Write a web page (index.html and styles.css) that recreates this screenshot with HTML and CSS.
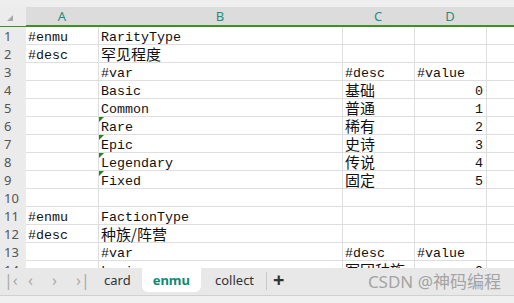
FILE: index.html
```html
<!DOCTYPE html>
<html lang="zh">
<head>
    <meta charset="UTF-8">
    <title>enmu</title>
    <link rel="stylesheet" href="styles.css">
</head>
<body>
    <div class="topstrip"></div>

    <div class="colhead">
        <div class="corner"><span class="tri"></span></div>
        <div class="ch">A</div>
        <div class="ch">B</div>
        <div class="ch">C</div>
        <div class="ch">D</div>
        <div class="ch"></div>
    </div>

    <div class="sheet">
        <div class="row"><div class="rn">1</div><div class="c">#enmu</div><div class="c">RarityType</div><div class="c"></div><div class="c"></div><div class="c"></div></div>
        <div class="row"><div class="rn">2</div><div class="c">#desc</div><div class="c cjk">罕见程度</div><div class="c"></div><div class="c"></div><div class="c"></div></div>
        <div class="row"><div class="rn">3</div><div class="c"></div><div class="c">#var</div><div class="c">#desc</div><div class="c">#value</div><div class="c"></div></div>
        <div class="row"><div class="rn">4</div><div class="c"></div><div class="c">Basic</div><div class="c cjk">基础</div><div class="c num">0</div><div class="c"></div></div>
        <div class="row"><div class="rn">5</div><div class="c"></div><div class="c">Common</div><div class="c cjk">普通</div><div class="c num">1</div><div class="c"></div></div>
        <div class="row"><div class="rn">6</div><div class="c"></div><div class="c note">Rare</div><div class="c cjk">稀有</div><div class="c num">2</div><div class="c"></div></div>
        <div class="row"><div class="rn">7</div><div class="c"></div><div class="c note">Epic</div><div class="c cjk">史诗</div><div class="c num">3</div><div class="c"></div></div>
        <div class="row"><div class="rn">8</div><div class="c"></div><div class="c note">Legendary</div><div class="c cjk">传说</div><div class="c num">4</div><div class="c"></div></div>
        <div class="row"><div class="rn">9</div><div class="c"></div><div class="c note">Fixed</div><div class="c cjk">固定</div><div class="c num">5</div><div class="c"></div></div>
        <div class="row"><div class="rn">10</div><div class="c"></div><div class="c"></div><div class="c"></div><div class="c"></div><div class="c"></div></div>
        <div class="row"><div class="rn">11</div><div class="c">#enmu</div><div class="c">FactionType</div><div class="c"></div><div class="c"></div><div class="c"></div></div>
        <div class="row"><div class="rn">12</div><div class="c">#desc</div><div class="c cjk">种族/阵营</div><div class="c"></div><div class="c"></div><div class="c"></div></div>
        <div class="row"><div class="rn">13</div><div class="c"></div><div class="c">#var</div><div class="c">#desc</div><div class="c">#value</div><div class="c"></div></div>
        <div class="row"><div class="rn">14</div><div class="c"></div><div class="c">Legion</div><div class="c cjk">军团种族</div><div class="c num">0</div><div class="c"></div></div>
    </div>

    <div class="tabbar">
        <div class="nav">
            <span class="navbtn">|&lsaquo;</span>
            <span class="navbtn">&lsaquo;</span>
            <span class="navbtn">&rsaquo;</span>
            <span class="navbtn">&rsaquo;|</span>
        </div>
        <div class="tab">card</div>
        <div class="tab active">enmu</div>
        <div class="tab">collect</div>
        <div class="sep"></div>
        <div class="add">+</div>
        <div class="mark">CSDN @神码编程</div>
    </div>

    <div class="status"></div>
</body>
</html>
```

FILE: styles.css
```css
body {
    margin: 0;
    width: 514px;
    height: 303px;
    overflow: hidden;
    background: #fff;
    font-family: "Liberation Mono", "Noto Sans CJK SC", monospace;
}

.topstrip {
    height: 7px;
    background: #eeeeee;
}

.colhead, .row {
    display: grid;
    grid-template-columns: 26px 72px 244px 72px 72px 1fr;
}

.colhead {
    height: 18px;
    background: #dcdcdc;
    border-bottom: 2px solid #3f8f25;
}

.corner {
    background: #ececec;
    position: relative;
}

.tri {
    position: absolute;
    left: 7px;
    top: 8px;
    width: 0;
    height: 0;
    border-left: 6px solid transparent;
    border-bottom: 6px solid #a8a8a8;
}

.ch {
    text-align: center;
    font-family: "Noto Sans", sans-serif;
    font-size: 13px;
    line-height: 19px;
    color: #1f8f80;
}

.sheet {
    height: 241px;
    overflow: hidden;
}

.row {
    height: 17px;
    border-bottom: 1px solid #dedede;
}

.rn {
    background: #ebebeb;
    color: #555;
    font-family: "Noto Sans", sans-serif;
    font-size: 13px;
    line-height: 19px;
    padding-left: 4px;
}

.c {
    border-left: 1px solid #dedede;
    font-size: 13.33px;
    line-height: 21px;
    color: #111;
    padding-left: 2px;
    white-space: nowrap;
    position: relative;
}

.rn + .c {
    border-left: none;
}

.cjk {
    font-family: "Noto Sans CJK SC", sans-serif;
    font-size: 15px;
    line-height: 17px;
}

.num {
    text-align: right;
    padding-right: 3px;
}

.note::before {
    content: "";
    position: absolute;
    left: 0;
    top: 0;
    border-top: 5px solid #1b8a1b;
    border-right: 5px solid transparent;
}

.tabbar {
    position: relative;
    height: 27px;
    background: #e8e8e8;
    display: flex;
    align-items: flex-start;
    font-family: "Noto Sans", sans-serif;
    font-size: 13px;
    color: #333;
}

.nav {
    display: flex;
    width: 90px;
    padding-left: 4px;
    gap: 12px;
    line-height: 25px;
    color: #a8a8a8;
    font-size: 16px;
}

.navbtn {
    width: 12px;
}

.tab {
    padding: 0 10px;
    line-height: 24px;
}

.active {
    background: #fff;
    color: #0f8a72;
    font-weight: bold;
    border-radius: 0 0 6px 6px;
    padding: 0 11px;
    margin: 0 4px 0 1px;
}

.sep {
    width: 1px;
    height: 18px;
    margin: 4px 0 0 2px;
    background: #c8c8c8;
}

.add {
    padding: 0 6px;
    font-size: 20px;
    font-weight: bold;
    line-height: 24px;
}

.mark {
    margin-left: auto;
    margin-right: 13px;
    font-size: 17px;
    line-height: 27px;
    color: #a4a4a4;
    font-family: "Noto Sans", "Noto Sans CJK SC", sans-serif;
}

.status {
    height: 8px;
    background: #f0f0f0;
    border-top: 1px solid #d0d0d0;
}
```
